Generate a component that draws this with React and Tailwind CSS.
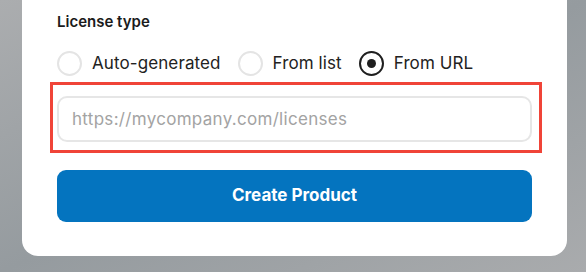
import React, { useState } from 'react';

const options = [
  { id: 'auto', label: 'Auto-generated' },
  { id: 'list', label: 'From list' },
  { id: 'url', label: 'From URL' },
];

function Radio({ checked, label, onClick }) {
  return (
    <button type="button" onClick={onClick} className="flex items-center gap-[10px]">
      <span className={`flex h-[25px] w-[25px] items-center justify-center rounded-full border-2 ${checked ? 'border-[#1f1f1f]' : 'border-[#e4e4e4]'}`}>
        {checked && <span className="h-[9px] w-[9px] rounded-full bg-[#1f1f1f]" />}
      </span>
      <span className="text-[17px] tracking-[0.1px] text-[#222]">{label}</span>
    </button>
  );
}

export default function App() {
  const [type, setType] = useState('url');

  return (
    <div className="h-[272px] w-[586px] overflow-hidden bg-gradient-to-br from-[#abadaf] via-[#959b9f] to-[#a9abad] pl-[22px] pr-[19px]" style={{ fontFamily: 'Inter, "Noto Sans", sans-serif' }}>
      <div className="h-[256px] rounded-b-[16px] bg-white px-[35px] pt-[12px]">
        <div className="text-[15px] font-semibold leading-[20px] text-[#1b1b1b]">License type</div>

        <div className="mt-[19px] flex items-center gap-[17px]">
          {options.map((o) => (
            <Radio key={o.id} label={o.label} checked={type === o.id} onClick={() => setType(o.id)} />
          ))}
        </div>

        <div className="relative mt-[19px]">
          <input
            type="text"
            placeholder="https://mycompany.com/licenses"
            className="h-[46px] w-full rounded-[10px] border-2 border-[#e6e6e6] px-[13px] text-[17px] tracking-[0.3px] text-[#222] placeholder:text-[#a3a3a3] focus:outline-none"
          />
          <div className="pointer-events-none absolute -bottom-[11px] -left-[7px] -right-[10px] -top-[14px] border-[3px] border-[#f04438]" />
        </div>

        <button type="button" className="mt-[28px] h-[52px] w-full rounded-[9px] bg-[#0474bf] text-[17px] font-bold text-white">
          Create Product
        </button>
      </div>
    </div>
  );
}
